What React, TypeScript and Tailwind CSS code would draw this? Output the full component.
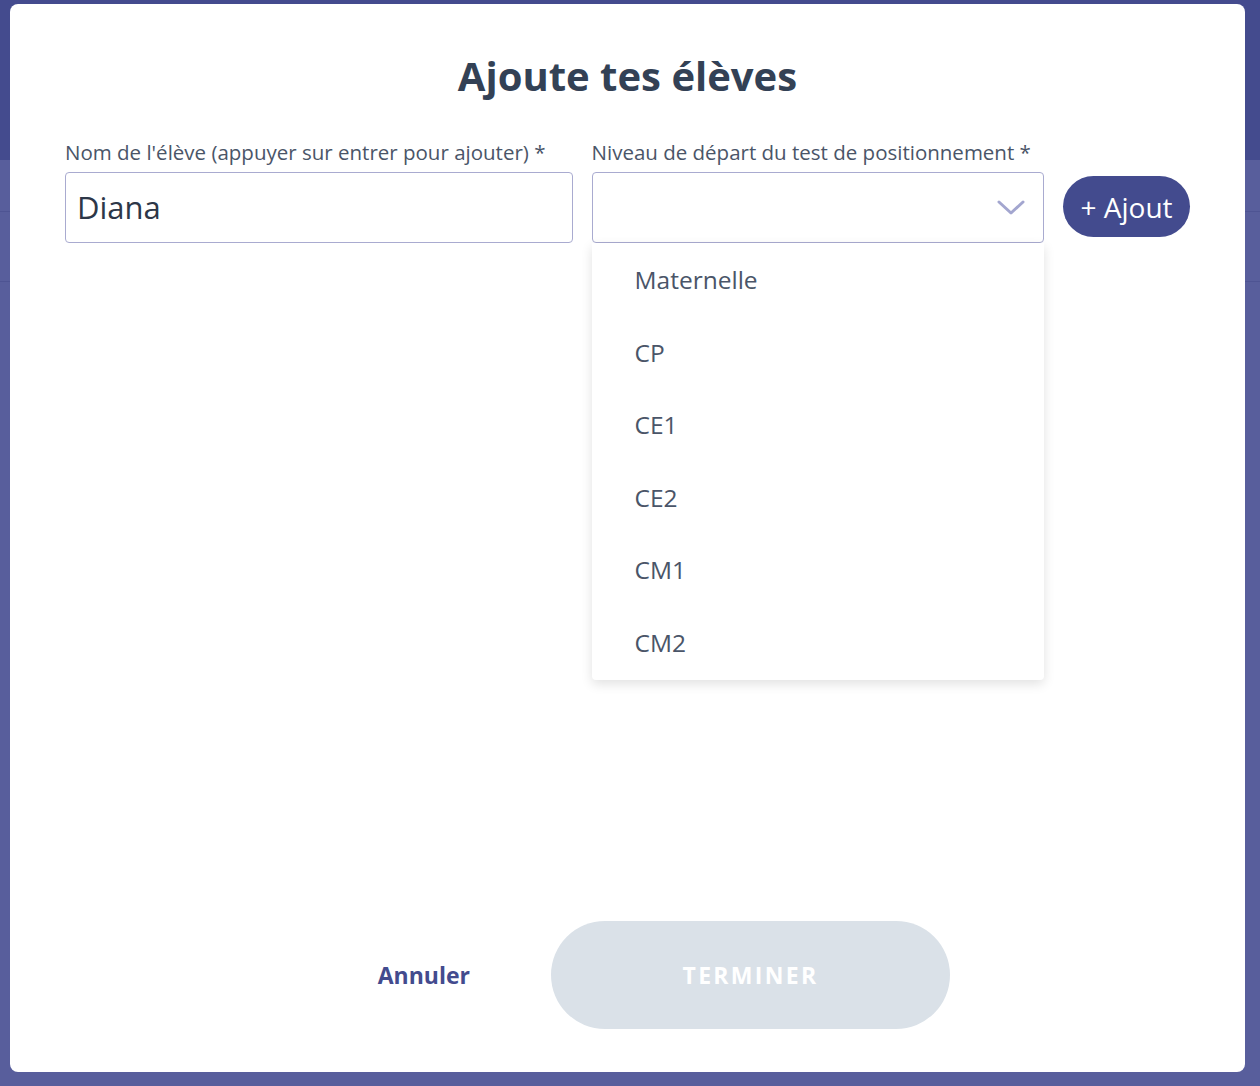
import React from 'react'

const levels = ['Maternelle', 'CP', 'CE1', 'CE2', 'CM1', 'CM2']

const Chevron = () => (
  <svg width="28" height="16" viewBox="0 0 28 16" fill="none">
    <path d="M2 2l12 11L26 2" stroke="#a3a6cf" strokeWidth="3" strokeLinecap="round" strokeLinejoin="round" />
  </svg>
)

const App = () => {
  return (
    <div className="relative h-[1086px] w-full overflow-hidden bg-[#585e9c] font-['Open_Sans',sans-serif]">
      {/* backdrop page */}
      <div className="h-[160px] bg-[#444b8e]" />
      <div className="h-[52px] border-b border-[#4e5493]" />
      <div className="h-[70px] border-b border-[#4e5493]" />

      {/* modal */}
      <div className="absolute left-[10px] top-[4px] flex h-[1068px] w-[1235px] flex-col rounded-[8px] bg-white px-[55px] pb-[43px] pt-[47px]">
        <h1 className="text-center text-[40px] font-bold leading-[50px] text-[#334155]">
          Ajoute tes élèves
        </h1>

        <div className="mt-[39px] flex items-end gap-[19px]">
          <div className="flex w-[508px] flex-col gap-[8px]">
            <label className="whitespace-nowrap text-[20.5px] leading-[24px] text-[#4a5568]">
              Nom de l'élève (appuyer sur entrer pour ajouter) *
            </label>
            <div className="flex h-[71px] items-center rounded-[4px] border border-[#a9abd0] px-[11px] text-[31px] text-[#2d3748]">
              Diana
            </div>
          </div>

          <div className="relative flex w-[453px] flex-col gap-[8px]">
            <label className="whitespace-nowrap text-[20.5px] leading-[24px] text-[#4a5568]">
              Niveau de départ du test de positionnement *
            </label>
            <div className="flex h-[71px] items-center justify-end rounded-[4px] border border-[#a9abd0] pr-[18px]">
              <Chevron />
            </div>
            <ul className="absolute left-0 top-[103px] w-full rounded-b-[4px] bg-white pt-[1px] shadow-[0_4px_12px_rgba(0,0,0,0.12)]">
              {levels.map(l => (
                <li key={l} className="flex h-[72.6px] items-center px-[43px] text-[24.5px] text-[#4a5568]">
                  {l}
                </li>
              ))}
            </ul>
          </div>

          <button className="mb-[6px] h-[61px] w-[127px] rounded-full bg-[#434b8e] text-[28px] text-white">
            + Ajout
          </button>
        </div>

        <div className="mt-auto flex items-center gap-[81px]">
          <div className="w-[405px] text-right">
            <button className="text-[23px] font-bold text-[#434b8e]">Annuler</button>
          </div>
          <button className="h-[108px] w-[399px] rounded-full bg-[#dae1e8] text-[23px] font-bold tracking-[0.1em] text-white">
            TERMINER
          </button>
        </div>
      </div>
    </div>
  )
}

export default App
